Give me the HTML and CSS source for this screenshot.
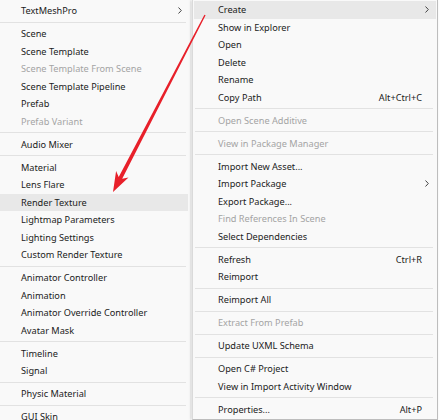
FILE: index.html
```html
<!DOCTYPE html>
<html>
<head>
<meta charset="utf-8">
<link rel="stylesheet" href="styles.css">
</head>
<body>
<div class="screen">
  <div class="menu menu-left">
    <div class="item"><span class="label">TextMeshPro</span><span class="sub"><svg width="4" height="7" viewBox="0 0 4 7"><path d="M0.5 0.5 L3.3 3.5 L0.5 6.5" fill="none" stroke="#444" stroke-width="1"/></svg></span></div>
    <div class="sep"></div>
    <div class="item"><span class="label">Scene</span></div>
    <div class="item"><span class="label">Scene Template</span></div>
    <div class="item disabled"><span class="label">Scene Template From Scene</span></div>
    <div class="item"><span class="label">Scene Template Pipeline</span></div>
    <div class="item"><span class="label">Prefab</span></div>
    <div class="item disabled"><span class="label">Prefab Variant</span></div>
    <div class="sep"></div>
    <div class="item"><span class="label">Audio Mixer</span></div>
    <div class="sep"></div>
    <div class="item"><span class="label">Material</span></div>
    <div class="item"><span class="label">Lens Flare</span></div>
    <div class="item hover"><span class="label">Render Texture</span></div>
    <div class="item"><span class="label">Lightmap Parameters</span></div>
    <div class="item"><span class="label">Lighting Settings</span></div>
    <div class="item"><span class="label">Custom Render Texture</span></div>
    <div class="sep"></div>
    <div class="item"><span class="label">Animator Controller</span></div>
    <div class="item"><span class="label">Animation</span></div>
    <div class="item"><span class="label">Animator Override Controller</span></div>
    <div class="item"><span class="label">Avatar Mask</span></div>
    <div class="sep"></div>
    <div class="item"><span class="label">Timeline</span></div>
    <div class="item"><span class="label">Signal</span></div>
    <div class="sep"></div>
    <div class="item"><span class="label">Physic Material</span></div>
    <div class="sep"></div>
    <div class="item"><span class="label">GUI Skin</span></div>
  </div>
  <div class="menu menu-right">
    <div class="item hover"><span class="label">Create</span><span class="sub"><svg width="4" height="7" viewBox="0 0 4 7"><path d="M0.5 0.5 L3.3 3.5 L0.5 6.5" fill="none" stroke="#444" stroke-width="1"/></svg></span></div>
    <div class="item"><span class="label">Show in Explorer</span><span class="sub"></span></div>
    <div class="item"><span class="label">Open</span><span class="sub"></span></div>
    <div class="item"><span class="label">Delete</span><span class="sub"></span></div>
    <div class="item"><span class="label">Rename</span><span class="sub"></span></div>
    <div class="item"><span class="label">Copy Path</span><span class="key">Alt+Ctrl+C</span><span class="sub"></span></div>
    <div class="sep"></div>
    <div class="item disabled"><span class="label">Open Scene Additive</span><span class="sub"></span></div>
    <div class="sep"></div>
    <div class="item disabled"><span class="label">View in Package Manager</span><span class="sub"></span></div>
    <div class="sep"></div>
    <div class="item"><span class="label">Import New Asset...</span><span class="sub"></span></div>
    <div class="item"><span class="label">Import Package</span><span class="sub"><svg width="4" height="7" viewBox="0 0 4 7"><path d="M0.5 0.5 L3.3 3.5 L0.5 6.5" fill="none" stroke="#444" stroke-width="1"/></svg></span></div>
    <div class="item"><span class="label">Export Package...</span><span class="sub"></span></div>
    <div class="item disabled"><span class="label">Find References In Scene</span><span class="sub"></span></div>
    <div class="item"><span class="label">Select Dependencies</span><span class="sub"></span></div>
    <div class="sep"></div>
    <div class="item"><span class="label">Refresh</span><span class="key">Ctrl+R</span><span class="sub"></span></div>
    <div class="item"><span class="label">Reimport</span><span class="sub"></span></div>
    <div class="sep"></div>
    <div class="item"><span class="label">Reimport All</span><span class="sub"></span></div>
    <div class="sep"></div>
    <div class="item disabled"><span class="label">Extract From Prefab</span><span class="sub"></span></div>
    <div class="sep"></div>
    <div class="item"><span class="label">Update UXML Schema</span><span class="sub"></span></div>
    <div class="sep"></div>
    <div class="item"><span class="label">Open C# Project</span><span class="sub"></span></div>
    <div class="item"><span class="label">View in Import Activity Window</span><span class="sub"></span></div>
    <div class="sep"></div>
    <div class="item"><span class="label">Properties...</span><span class="key">Alt+P</span><span class="sub"></span></div>
  </div>
  <svg class="arrow" width="440" height="420" viewBox="0 0 440 420">
    <polygon fill="#e8202a" points="205.6,15.3 122.2,178.8 128.5,177.6 113,192 116.1,171 118.7,176.9 204.4,14.7"/>
  </svg>
</div>
</body>
</html>
```

FILE: styles.css
```css
html, body {
  margin: 0;
  padding: 0;
}
body {
  width: 440px;
  height: 420px;
  overflow: hidden;
  background: #ffffff;
  font-family: "Noto Sans", "Open Sans", sans-serif;
  font-size: 9.2px;
  color: #1b1b1b;
}
.screen {
  position: relative;
  display: flex;
  align-items: flex-start;
  width: 440px;
  height: 420px;
}
.menu {
  background: #f9f9f9;
  box-sizing: border-box;
}
.menu-left {
  width: 190px;
  height: 420px;
  padding-top: 2px;
  padding-right: 2px;
  box-shadow: 1px 0 2px rgba(0,0,0,0.10);
}
.menu-right {
  width: 246px;
  margin-left: 2px;
  padding: 1px 0 1px 0;
  border-left: 1px solid #dadada;
  border-right: 1px solid #bdbdbd;
  border-bottom: 1px solid #bdbdbd;
  box-shadow: -1px 0 3px rgba(0,0,0,0.12);
}
.item {
  display: flex;
  align-items: center;
  height: 17.5px;
  line-height: 17.5px;
  white-space: nowrap;
}
.menu-left .item {
  padding-left: 21px;
}
.menu-right .item {
  margin: 0 1px;
  padding-left: 24px;
}
.item.hover {
  background: #e8e8e8;
}
.item.disabled {
  color: #a4a4a4;
}
.label {
  flex: 1;
}
.key {
  flex: none;
}
.sub {
  flex: none;
  display: flex;
  align-items: center;
}
.menu-left .sub {
  width: 10px;
}
.menu-right .sub {
  width: 11px;
  padding-left: 3px;
}
.sub svg {
  display: block;
}
.sep {
  height: 1px;
  background: #e2e2e2;
  margin: 2.25px 0;
}
.menu-left .sep {
  margin-right: 2px;
}
.menu-right .sep {
  margin-left: 2px;
  margin-right: 4px;
}
.arrow {
  position: absolute;
  left: 0;
  top: 0;
  pointer-events: none;
}
```
